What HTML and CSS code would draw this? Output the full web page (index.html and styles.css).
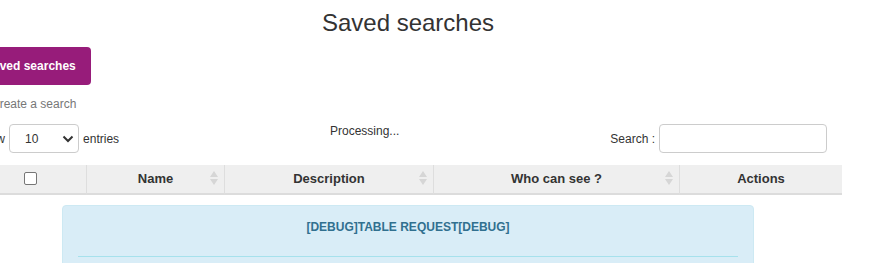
FILE: index.html
```html
<!DOCTYPE html>
<html>
<head>
<meta charset="utf-8">
<title>Saved searches</title>
<link rel="stylesheet" href="styles.css">
</head>
<body>
<div class="page">
  <h1 class="title">Saved searches</h1>
  <div class="btn-row"><a class="btn-primary">Saved searches</a></div>
  <div class="create-row"><a class="create-link">Create a search</a></div>
  <div class="controls">
    <label class="length">Show
      <span class="select-wrap">
        <select class="length-select"><option>10</option><option>25</option></select>
        <svg class="chev" width="12" height="8" viewBox="0 0 12 8"><path d="M1.5 1.5 L6 6 L10.5 1.5" fill="none" stroke="#333" stroke-width="2"/></svg>
      </span>
      entries</label>
    <div class="processing">Processing...</div>
    <label class="filter">Search :<input class="filter-input" type="text"></label>
  </div>
  <table class="grid">
    <thead>
      <tr>
        <th class="c-check"><span class="cbox"></span></th>
        <th class="c-name sortable">Name<svg class="sort" width="8" height="16" viewBox="0 0 8 16"><path d="M4 1 L8 7 L0 7 Z M4 15 L8 9 L0 9 Z" fill="#d6d6d6"/></svg></th>
        <th class="c-desc sortable">Description<svg class="sort" width="8" height="16" viewBox="0 0 8 16"><path d="M4 1 L8 7 L0 7 Z M4 15 L8 9 L0 9 Z" fill="#d6d6d6"/></svg></th>
        <th class="c-who sortable">Who can see ?<svg class="sort" width="8" height="16" viewBox="0 0 8 16"><path d="M4 1 L8 7 L0 7 Z M4 15 L8 9 L0 9 Z" fill="#d6d6d6"/></svg></th>
        <th class="c-act">Actions</th>
      </tr>
    </thead>
  </table>
  <div class="debug">
    <div class="debug-text">[DEBUG]TABLE REQUEST[DEBUG]</div>
    <hr class="debug-hr">
  </div>
</div>
</body>
</html>
```

FILE: styles.css
```css
html, body {
  margin: 0;
  padding: 0;
  background: #fff;
  overflow: hidden;
}
body {
  font-family: "Liberation Sans", Arial, sans-serif;
  font-size: 12px;
  color: #333;
}
.page {
  width: 868px;
  margin-left: -26px;
  padding-top: 10px;
  position: relative;
}
.title {
  margin: 0;
  font-size: 24px;
  font-weight: normal;
  line-height: 26px;
  text-align: center;
  color: #333;
}
.btn-row {
  margin-top: 11px;
  height: 38px;
}
.btn-primary {
  display: inline-block;
  box-sizing: border-box;
  height: 38px;
  padding: 0 15px 0 11px;
  line-height: 38px;
  background: #971c7a;
  color: #fff;
  font-weight: bold;
  font-size: 12px;
  border-radius: 4px;
}
.create-row {
  margin-top: 10px;
  line-height: 18px;
  padding-left: 17px;
}
.create-link {
  color: #777;
  font-size: 12px;
}
.controls {
  margin-top: 11px;
  height: 29px;
  display: flex;
  align-items: center;
  justify-content: space-between;
  padding-right: 15px;
  padding-left: 1px;
}
.length {
  display: flex;
  align-items: center;
  gap: 4px;
}
.select-wrap {
  position: relative;
  display: inline-block;
}
.length-select {
  -webkit-appearance: none;
  appearance: none;
  width: 70px;
  height: 29px;
  box-sizing: border-box;
  border: 1px solid #ccc;
  border-radius: 4px;
  background: #fff;
  padding: 0 0 0 15px;
  font-family: "Liberation Sans", Arial, sans-serif;
  font-size: 12px;
  color: #333;
  display: block;
}
.chev {
  position: absolute;
  right: 5px;
  top: 11px;
}
.processing {
  position: absolute;
  left: 356px;
  top: 124px;
  line-height: 14px;
}
.filter {
  display: flex;
  align-items: center;
  gap: 4px;
}
.filter-input {
  width: 168px;
  height: 29px;
  box-sizing: border-box;
  border: 1px solid #ccc;
  border-radius: 4px;
  margin: 0;
  padding: 0 6px;
}
.grid {
  margin-top: 12px;
  border-collapse: separate;
  border-spacing: 0;
  table-layout: fixed;
  width: 868px;
}
.grid th {
  box-sizing: border-box;
  height: 30px;
  padding: 0 0 1px;
  background: #efefef;
  border-bottom: 2px solid #dcdcdc;
  font-size: 13px;
  font-weight: bold;
  color: #333;
  text-align: center;
  position: relative;
  vertical-align: middle;
}
.grid th + th {
  border-left: 1px solid #dedede;
}
.c-check { width: 112px; }
.c-name { width: 138px; }
.c-desc { width: 209px; }
.c-who { width: 246px; }
.c-act { width: 163px; }
.cbox {
  display: inline-block;
  width: 11px;
  height: 11px;
  border: 1px solid #767676;
  border-radius: 2px;
  background: #fff;
  vertical-align: middle;
  margin-top: -2px;
}
.sort {
  position: absolute;
  right: 6px;
  top: 5px;
}
.debug {
  margin: 10px 88px 0;
  background: #d9edf7;
  border: 1px solid #cde9f3;
  border-radius: 4px;
  padding: 14px 15px 20px;
  color: #31708f;
}
.debug-text {
  text-align: center;
  font-weight: bold;
  font-size: 12px;
  line-height: 14px;
}
.debug-hr {
  margin: 22px 0 0;
  border: 0;
  border-top: 1px solid #a6e1ec;
  height: 0;
}
```
